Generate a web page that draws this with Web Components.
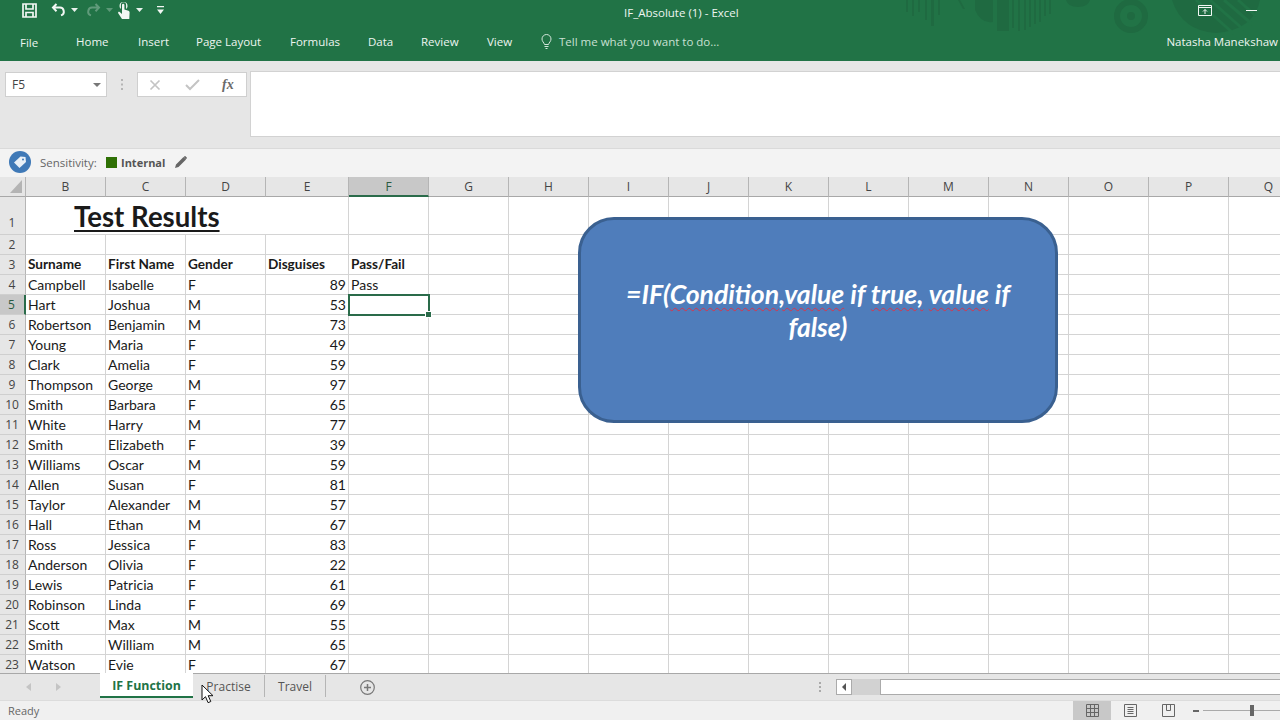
<!DOCTYPE html>
<html>
<head>
<meta charset="utf-8">
<title>IF_Absolute (1) - Excel</title>
<style>
  html, body { margin: 0; height: 720px; overflow: hidden; background: #e6e6e6; }
  body { display: flex; flex-direction: column; width: 1280px; font-family: "Open Sans", sans-serif; }
</style>
</head>
<body>
<x-titlebar file="IF_Absolute (1) - Excel" user="Natasha Manekshaw"></x-titlebar>
<x-formulabar cell="F5"></x-formulabar>
<x-sensitivity label="Internal"></x-sensitivity>
<x-sheet>
  <x-callout>=IF(<u>Condition,value</u> if <u>true,</u> <u>value</u> if false)</x-callout>
</x-sheet>
<x-tabbar></x-tabbar>
<x-statusbar></x-statusbar>

<script>
class XTitlebar extends HTMLElement {
  constructor() {
    super();
    this.attachShadow({ mode: 'open' });
  }

  connectedCallback() {
    const tabs = ['File', 'Home', 'Insert', 'Page Layout', 'Formulas', 'Data', 'Review', 'View'];
    const caret = (o = 1) => `<svg width="7" height="4" viewBox="0 0 7 4" style="opacity:${o}"><path d="M0 0h7L3.500 4z" fill="#e8f1ec"/></svg>`;
    this.shadowRoot.innerHTML = `
      <style>
        :host { display: block; position: relative; height: 61px; flex: none; background: #217346; color: #eef5f1; font: 11.5px "Open Sans", sans-serif; overflow: hidden; }
        .deco { position: absolute; left: 900px; top: 0; }
        .top { position: relative; display: grid; grid-template-columns: 624px auto 1fr; height: 28px; align-items: start; }
        .qat { display: flex; align-items: center; padding-left: 22px; height: 20px; }
        .qat svg { flex: none; }
        .name { line-height: 26px; }
        .win { display: flex; justify-content: flex-end; align-items: center; gap: 34px; padding-right: 23px; height: 20px; }
        .tabs { position: relative; display: grid; grid-template-columns: 76px 62px 58px 94px 78px 53px 66px 54px auto 1fr; align-items: center; height: 27px; }
        .tab:first-child { padding-left: 20px; padding-top: 1px; }
        .tell { display: flex; align-items: center; gap: 7px; color: #c9e0d3; }
        .user { text-align: right; padding-right: 2px; white-space: nowrap; }
      </style>
      <svg class="deco" width="380" height="61" viewBox="0 0 380 61" fill="#1f6a41">
        <path d="M6 0h2v12H6zM12 0h2v16h-2zM18 0h2v12h-2zM25 0h2v20h-2zM31 0h3v26h-3zM38 0h2v15h-2zM60 0l5 9h-2l-5-9z"/>
        <path d="M75 0h18v22q-12 2-18-12zM97 0h12v31H97z"/>
        <path d="M112 0h2v28h-2zM118 0h2v31h-2zM124 0h2v30h-2zM129 0h2v27h-2zM134 0h2v24h-2zM139 0h2v22h-2zM144 0h2v16h-2zM149 0h2v14h-2z"/>
        <path d="M166 0h24q-2 7-12 7t-12-7z"/>
        <circle cx="231" cy="16" r="14" fill="none" stroke="#1f6a41" stroke-width="6"/>
        <circle cx="231" cy="16" r="4"/>
        <path d="M272 0h88q-6 30-44 33q-34-2-44-33z"/>
        <path d="M296 0l38 34M310 0l34 30M324 0l28 24M338 0l18 16" stroke="#217346" stroke-width="3"/>
      </svg>
      <div class="top">
        <div class="qat">
          <svg width="15" height="15" viewBox="0 0 15 15" fill="none" stroke="#f2f7f4" stroke-width="1.7"><path d="M1 1h13v13H1z"/><path d="M4 1v5h7V1M4 14V9.500h7V14"/></svg>
          <svg style="margin-left:14px" width="15" height="14" viewBox="0 0 15 14" fill="none" stroke="#f2f7f4" stroke-width="2"><path d="M5.500 1L2 4.600l3.500 3.600M2 4.600h6.500a4 4 0 0 1 1.500 7.800"/></svg>
          <span style="margin-left:5px;display:flex">${caret()}</span>
          <svg style="margin-left:8px;opacity:.3" width="15" height="14" viewBox="0 0 15 14" fill="none" stroke="#f2f7f4" stroke-width="2"><path d="M9.500 1L13 4.600 9.500 8.200M13 4.600H6.500a4 4 0 0 0-1.500 7.800"/></svg>
          <span style="margin-left:5px;display:flex">${caret(.3)}</span>
          <svg style="margin-left:4px" width="13" height="18" viewBox="0 0 13 18" fill="#f2f7f4"><path d="M2.500 5a4 4 0 1 1 8 0c0 1.300-.5 2.400-1.400 3.100V3.800a2.600 2.600 0 0 0-5.200 0v4.300A4 4 0 0 1 2.500 5z"/><path d="M5 4a1.200 1.200 0 0 1 2.400 0v4.500l4 1.200c.8.300 1.300 1 1.200 1.800L12.300 18H5L1.200 12.200c-.5-1 .7-1.900 1.500-1.100L5 13z"/></svg>
          <span style="margin-left:6px;display:flex">${caret()}</span>
          <svg style="margin-left:14px" width="7" height="8" viewBox="0 0 7 8" fill="#f2f7f4"><path d="M0 0h7v1.300H0zM0 3.500h7L3.500 8z"/></svg>
        </div>
        <div class="name">${this.getAttribute('file')}</div>
        <div class="win">
          <svg width="14" height="11" viewBox="0 0 14 11" fill="none" stroke="#f2f7f4"><path d="M.5.5h13v10H.5zM.5 2.500h13M7 9V4.500M5 6.500l2-2 2 2"/></svg>
          <svg width="11" height="1" viewBox="0 0 11 1"><path d="M0 0h11v1H0z" fill="#f2f7f4"/></svg>
        </div>
      </div>
      <div class="tabs">
        ${tabs.map(t => `<div class="tab">${t}</div>`).join('')}
        <div class="tell">
          <svg width="11" height="15" viewBox="0 0 11 15" fill="none" stroke="#d3e6db" stroke-width="1"><path d="M3.500 10.500C3 8.500 1 7.500 1 5a4.500 4.500 0 0 1 9 0c0 2.500-2 3.500-2.500 5.500zM3.500 12.500h4M4.500 14.500h2"/></svg>
          <span>Tell me what you want to do...</span>
        </div>
        <div class="user">${this.getAttribute('user')}</div>
      </div>
    `;
  }
}
customElements.define('x-titlebar', XTitlebar);

class XFormulabar extends HTMLElement {
  constructor() {
    super();
    this.attachShadow({ mode: 'open' });
  }

  connectedCallback() {
    this.shadowRoot.innerHTML = `
      <style>
        :host { display: flex; align-items: flex-start; flex: none; height: 87px; box-sizing: border-box; padding: 10px 0 0 5px; background: #e6e6e6; font: 12px "Open Sans", sans-serif; color: #444; }
        .namebox { box-sizing: border-box; width: 102px; height: 25px; background: #fff; border: 1px solid #cfcfcf; display: flex; align-items: center; justify-content: space-between; padding: 0 5px 0 6px; margin-top: 1px; }
        .dots { width: 30px; height: 25px; display: flex; align-items: center; justify-content: center; margin-top: 1px; }
        .fxbox { box-sizing: border-box; width: 110px; height: 25px; background: #fff; border: 1px solid #cfcfcf; display: flex; align-items: center; margin-top: 1px; padding-left: 11px; }
        .input { flex: 1; height: 66px; box-sizing: border-box; margin-left: 3px; background: #fff; border: 1px solid #d2d2d2; border-right: 0; }
        .fx { font: italic bold 14px "Liberation Serif", serif; color: #6a6a6a; margin-left: 22px; }
      </style>
      <div class="namebox"><span>${this.getAttribute('cell')}</span><svg width="8" height="4" viewBox="0 0 8 4"><path d="M0 0h8L4 4z" fill="#777"/></svg></div>
      <div class="dots"><svg width="2" height="11" viewBox="0 0 2 11" fill="#b5b5b5"><path d="M0 0h2v2H0zM0 4.500h2v2H0zM0 9h2v2H0z"/></svg></div>
      <div class="fxbox">
        <svg width="12" height="12" viewBox="0 0 12 12" stroke="#c4c4c4" stroke-width="1.7"><path d="M1.500 1.500l9 9M10.500 1.500l-9 9"/></svg>
        <svg style="margin-left:24px" width="15" height="12" viewBox="0 0 15 12" fill="none" stroke="#c4c4c4" stroke-width="2"><path d="M1 6l4 4 9-9"/></svg>
        <span class="fx">fx</span>
      </div>
      <div class="input"></div>
    `;
  }
}
customElements.define('x-formulabar', XFormulabar);

class XSensitivity extends HTMLElement {
  constructor() {
    super();
    this.attachShadow({ mode: 'open' });
  }

  connectedCallback() {
    this.shadowRoot.innerHTML = `
      <style>
        :host { display: flex; align-items: center; flex: none; height: 29px; box-sizing: border-box; padding: 0 0 2px 9px; background: #f3f3f3; border-top: 1px solid #dadada; font: 11.5px "Open Sans", sans-serif; color: #666; }
        .label { margin-left: 9px; width: 66px; }
        .sq { width: 11px; height: 11px; background: #2f7005; }
        b { margin-left: 4px; width: 54px; color: #555; font-size: 11px; }
      </style>
      <svg width="22" height="22" viewBox="0 0 22 22"><circle cx="11" cy="11" r="11" fill="#3f79b7"/><path d="M5 11.500L11.500 5.500l5 .5.500 5-6.500 6z" fill="#e9f0f7"/><circle cx="14" cy="8.500" r="1" fill="#3f79b7"/></svg>
      <span class="label">Sensitivity:</span>
      <span class="sq"></span>
      <b>${this.getAttribute('label')}</b>
      <svg width="12" height="12" viewBox="0 0 12 12" fill="#666"><path d="M0 12l1-3.500L8.500 1 11 3.500 3.500 11zM9.500.3l.7-.3 1.800 1.800-.3.7-.8.7L8.800 1z"/></svg>
    `;
  }
}
customElements.define('x-sensitivity', XSensitivity);

class XCallout extends HTMLElement {
  constructor() {
    super();
    this.attachShadow({ mode: 'open' });
  }

  connectedCallback() {
    this.shadowRoot.innerHTML = `
      <style>
        :host { position: absolute; left: 578px; top: 40px; width: 480px; height: 206px; box-sizing: border-box; padding: 58px 24px 0; background: #4f7dbb; border: 3px solid #3a6090; border-radius: 36px; color: #fff; text-align: center; font: italic bold 26.6px/33px Lato, sans-serif; }
        ::slotted(u) { text-decoration: underline wavy #d8344a 1px; text-underline-offset: 3px; }
      </style>
      <slot></slot>
    `;
  }
}
customElements.define('x-callout', XCallout);

class XSheet extends HTMLElement {
  constructor() {
    super();
    this.attachShadow({ mode: 'open' });
  }

  connectedCallback() {
    const rows = [
      ['Campbell', 'Isabelle', 'F', 89, 'Pass'], ['Hart', 'Joshua', 'M', 53], ['Robertson', 'Benjamin', 'M', 73],
      ['Young', 'Maria', 'F', 49], ['Clark', 'Amelia', 'F', 59], ['Thompson', 'George', 'M', 97],
      ['Smith', 'Barbara', 'F', 65], ['White', 'Harry', 'M', 77], ['Smith', 'Elizabeth', 'F', 39],
      ['Williams', 'Oscar', 'M', 59], ['Allen', 'Susan', 'F', 81], ['Taylor', 'Alexander', 'M', 57],
      ['Hall', 'Ethan', 'M', 67], ['Ross', 'Jessica', 'F', 83], ['Anderson', 'Olivia', 'F', 22],
      ['Lewis', 'Patricia', 'F', 61], ['Robinson', 'Linda', 'F', 69], ['Scott', 'Max', 'M', 55],
      ['Smith', 'William', 'M', 65], ['Watson', 'Evie', 'F', 67]
    ];
    const cols = 'BCDEFGHIJKLMNOPQ'.split('');
    let html = '<div class="corner"><svg width="12" height="13" viewBox="0 0 12 13"><path d="M12 0v13H0z" fill="#b4b4b4"/></svg></div>';
    html += cols.map(c => `<div class="ch${c === 'F' ? ' on' : ''}">${c}</div>`).join('');

    // row 1: the title runs across B to E with no gridlines between
    html += '<div class="rh r1">1</div><div class="c title"><span>Test Results</span></div>';
    html += cols.slice(4).map(() => '<div class="c"></div>').join('');
    html += '<div class="rh">2</div>' + cols.map(() => '<div class="c"></div>').join('');

    const head = ['Surname', 'First Name', 'Gender', 'Disguises', 'Pass/Fail'];
    html += '<div class="rh">3</div>' + cols.map((c, i) => `<div class="c b">${head[i] || ''}</div>`).join('');

    rows.forEach((r, n) => {
      const num = n + 4;
      html += `<div class="rh${num === 5 ? ' on' : ''}">${num}</div>`;
      html += cols.map((c, i) => {
        let cls = 'c';
        if (i === 3) cls += ' num';
        if (num === 5 && c === 'F') cls += ' sel';
        return `<div class="${cls}">${r[i] === undefined ? '' : r[i]}</div>`;
      }).join('');
    });

    this.shadowRoot.innerHTML = `
      <style>
        :host { display: block; position: relative; flex: none; height: 496px; overflow: hidden; background: #fff; font: 14px Lato, sans-serif; color: #1a1a1a; }
        .grid { display: grid; grid-template-columns: 26px 80px 80px 80px 83px repeat(12, 80px); grid-template-rows: 20px 38px repeat(22, 20px); }
        .corner { background: #e6e6e6; border-right: 1px solid #b5b5b5; border-bottom: 1px solid #a8a8a8; box-sizing: border-box; display: flex; align-items: flex-end; justify-content: flex-end; padding: 0 3px 3px 0; }
        .ch { background: #e6e6e6; border-right: 1px solid #b5b5b5; border-bottom: 1px solid #a8a8a8; box-sizing: border-box; display: flex; align-items: center; justify-content: center; font: 12px "Open Sans", sans-serif; color: #444; }
        .ch.on { background: #c8c8c8; border-bottom: 2px solid #2a6b4a; color: #2a5a42; }
        .rh { background: #e6e6e6; border-right: 1px solid #b5b5b5; border-bottom: 1px solid #cfcfcf; box-sizing: border-box; display: flex; align-items: flex-end; justify-content: center; font: 12px/18px "Open Sans", sans-serif; color: #444; padding-right: 1px; }
        .rh.r1 { padding-bottom: 2px; }
        .rh.on { background: #c8c8c8; border-right: 2px solid #2a6b4a; color: #2a5a42; }
        .c { border-right: 1px solid #d4d4d4; border-bottom: 1px solid #d4d4d4; box-sizing: border-box; line-height: 19px; padding: 0 2px; white-space: nowrap; overflow: hidden; }
        .b { font-weight: 700; font-size: 13.6px; }
        .num { text-align: right; }
        .title { grid-column: 2 / span 4; font-weight: 700; font-size: 27.6px; line-height: 34px; padding: 3px 0 0 48px; }
        .title span { text-decoration: underline; text-decoration-thickness: 2px; text-underline-offset: 3px; }
        .sel { margin: -1px; border: 2px solid #2a6b4a; position: relative; z-index: 1; overflow: visible; }
        .sel::after { content: ""; position: absolute; right: -4px; bottom: -4px; width: 5px; height: 5px; background: #2a6b4a; border: 1px solid #fff; }
      </style>
      <div class="grid">${html}</div>
      <slot></slot>
    `;
  }
}
customElements.define('x-sheet', XSheet);

class XTabbar extends HTMLElement {
  constructor() {
    super();
    this.attachShadow({ mode: 'open' });
  }

  connectedCallback() {
    this.shadowRoot.innerHTML = `
      <style>
        :host { display: flex; position: relative; flex: none; height: 27px; box-sizing: border-box; background: #e6e6e6; border-top: 1px solid #a8a8a8; font: 12px "Open Sans", sans-serif; color: #555; }
        .nav { width: 100px; display: flex; align-items: center; gap: 25px; padding-left: 26px; box-sizing: border-box; }
        .tab { display: flex; align-items: center; justify-content: center; height: 22px; margin-top: 1px; }
        .active { width: 93px; height: 25px; margin-top: -1px; padding-top: 2px; background: #fff; color: #217346; font-weight: 700; font-size: 12.4px; box-sizing: border-box; border-bottom: 2px solid #217346; }
        .plain { border-right: 1px solid #b5b5b5; box-sizing: border-box; }
        .add { margin: 6px 0 0 34px; }
        .right { margin-left: auto; width: 468px; display: flex; align-items: center; }
        .sdots { margin-left: 7px; width: 8px; }
        .btn { box-sizing: border-box; width: 16px; height: 16px; margin-left: 9px; background: #fff; border: 1px solid #ababab; display: flex; align-items: center; justify-content: center; }
        .thumb { width: 28px; height: 16px; background: #d2d2d2; }
        .track { flex: 1; height: 16px; box-sizing: border-box; background: #fff; border: 1px solid #ababab; border-right: 0; }
        .cursor { position: absolute; left: 201px; top: 10px; }
      </style>
      <div class="nav">
        <svg width="5" height="8" viewBox="0 0 5 8"><path d="M5 0v8L0 4z" fill="#c4c4c4"/></svg>
        <svg width="5" height="8" viewBox="0 0 5 8"><path d="M0 0v8l5-4z" fill="#c4c4c4"/></svg>
      </div>
      <div class="tab active">IF Function</div>
      <div class="tab plain" style="width:72px">Practise</div>
      <div class="tab plain" style="width:61px">Travel</div>
      <svg class="add" width="15" height="15" viewBox="0 0 15 15" fill="none" stroke="#777" stroke-width="1.2"><circle cx="7.500" cy="7.500" r="6.800"/><path d="M4 7.500h7M7.500 4v7" stroke-width="1.5"/></svg>
      <div class="right">
        <div class="sdots"><svg width="2" height="10" viewBox="0 0 2 10" fill="#aaa" style="display:block"><path d="M0 0h2v2H0zM0 4h2v2H0zM0 8h2v2H0z"/></svg></div>
        <div class="btn"><svg width="4" height="8" viewBox="0 0 4 8"><path d="M4 0v8L0 4z" fill="#555"/></svg></div>
        <div class="thumb"></div>
        <div class="track"></div>
      </div>
      <svg class="cursor" width="14" height="20" viewBox="0 0 14 20"><path d="M1 1v15l3.500-3.300 2.600 6 2.700-1.200-2.600-5.800H12z" fill="#fff" stroke="#111" stroke-width="1"/></svg>
    `;
  }
}
customElements.define('x-tabbar', XTabbar);

class XStatusbar extends HTMLElement {
  constructor() {
    super();
    this.attachShadow({ mode: 'open' });
  }

  connectedCallback() {
    this.shadowRoot.innerHTML = `
      <style>
        :host { display: flex; align-items: center; flex: none; height: 20px; box-sizing: border-box; background: #f0f0f0; border-top: 1px solid #dcdcdc; padding-left: 8px; font: 11px "Open Sans", sans-serif; color: #666; }
        .views { margin-left: auto; display: flex; height: 100%; }
        .v { width: 38px; display: flex; align-items: center; justify-content: center; }
        .v.on { background: #c8c8c8; }
        .zoom { width: 93px; box-sizing: border-box; padding-left: 6px; display: flex; align-items: center; }
        .line { flex: 1; height: 1px; margin-left: 4px; background: #aaa; position: relative; }
        .knob { position: absolute; left: 47px; top: -5px; width: 4px; height: 11px; background: #666; }
      </style>
      <span>Ready</span>
      <div class="views">
        <div class="v on"><svg width="13" height="13" viewBox="0 0 13 13" fill="none" stroke="#666"><path d="M.5.5h12v12H.5zM4.500.5v12M8.500.5v12M.5 4.500h12M.5 8.500h12"/></svg></div>
        <div class="v"><svg width="13" height="13" viewBox="0 0 13 13" fill="none" stroke="#666"><path d="M.5.5h12v12H.5zM3.500 3.500h6M3.500 5.500h6M3.500 7.500h6M3.500 9.500h6"/></svg></div>
        <div class="v"><svg width="13" height="13" viewBox="0 0 13 13" fill="none" stroke="#666"><path d="M.5.5h12v12H.5zM4.500.5v6h4V.5"/></svg></div>
      </div>
      <div class="zoom">
        <svg width="6" height="2" viewBox="0 0 6 2"><path d="M0 0h6v2H0z" fill="#666"/></svg>
        <div class="line"><div class="knob"></div></div>
      </div>
    `;
  }
}
customElements.define('x-statusbar', XStatusbar);
</script>
</body>
</html>
